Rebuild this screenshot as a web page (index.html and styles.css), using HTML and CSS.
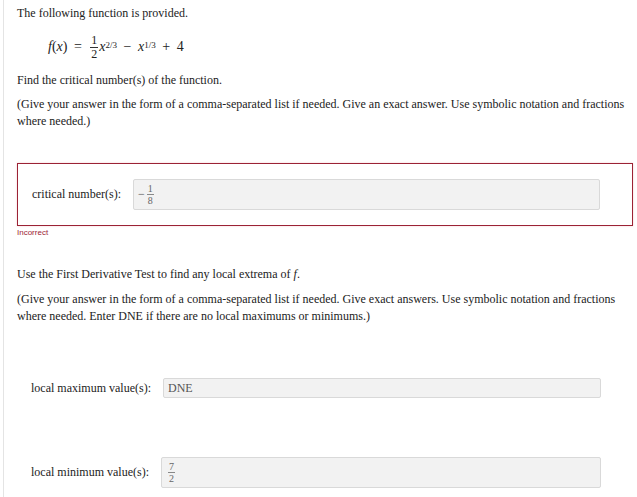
FILE: index.html
```html
<!DOCTYPE html>
<html lang="en">
<head>
    <meta charset="UTF-8">
    <title>Critical numbers</title>
    <link rel="stylesheet" href="styles.css">
</head>
<body>
    <div class="page">
        <p class="intro">The following function is provided.</p>
        <div class="formula">
            <i>f</i>(<i>x</i>) <span class="op">=</span> <span class="frac"><span>1</span><span>2</span></span><i>x</i><sup>2/3</sup> <span class="op">−</span> <i>x</i><sup>1/3</sup> <span class="op">+</span> 4
        </div>
        <p class="q">Find the critical number(s) of the function.</p>
        <p class="hint">(Give your answer in the form of a comma-separated list if needed. Give an exact answer. Use symbolic notation and fractions where needed.)</p>

        <!-- critical number -->
        <div class="answer-box wrong">
            <label>critical number(s):</label>
            <div class="field tall">−<span class="frac small"><span>1</span><span>8</span></span></div>
        </div>
        <div class="status">Incorrect</div>

        <p class="q second">Use the First Derivative Test to find any local extrema of <i>f</i>.</p>
        <p class="hint">(Give your answer in the form of a comma-separated list if needed. Give exact answers. Use symbolic notation and fractions where needed. Enter DNE if there are no local maximums or minimums.)</p>

        <div class="answer-box max">
            <label>local maximum value(s):</label>
            <div class="field">DNE</div>
        </div>
        <div class="answer-box min">
            <label>local minimum value(s):</label>
            <div class="field tall"><span class="frac small"><span>7</span><span>2</span></span></div>
        </div>
    </div>
</body>
</html>
```

FILE: styles.css
```css
* {
    margin: 0;
    padding: 0;
    box-sizing: border-box;
}

body {
    font-family: 'Liberation Serif', 'Times New Roman', serif;
    font-size: 12px;
    color: #222;
    background: #fff;
}

.page {
    margin-left: 3px;
    border-left: 1px solid #e4e4e4;
    padding: 5px 4px 0 13px;
    min-height: 497px;
    line-height: 17px;
}

.intro {
    margin-bottom: 12px;
}

.formula {
    padding-left: 31px;
    height: 26px;
    line-height: 26px;
    margin-bottom: 12px;
    font-size: 14px;
}

.formula .op {
    margin: 0 3px;
}

.formula sup {
    font-size: 9px;
    position: relative;
    top: -3px;
    vertical-align: baseline;
}

.frac {
    display: inline-block;
    vertical-align: middle;
    text-align: center;
    font-size: 12px;
    line-height: 13px;
    margin: 0 1px 0 2px;
}

.frac span {
    display: block;
}

.frac span:first-child {
    border-bottom: 1px solid #333;
    padding: 0 1px;
}

.frac.small {
    font-size: 10px;
    line-height: 11px;
    color: #666;
}

.frac.small span:first-child {
    border-bottom-color: #888;
}

.q {
    margin-bottom: 7px;
}

.answer-box {
    display: flex;
    align-items: center;
    padding: 0 32px 0 14px;
}

.answer-box label {
    margin-right: 12px;
    white-space: nowrap;
}

.answer-box.wrong {
    margin-top: 33px;
    height: 63px;
    border: 1px solid #9b2335;
    box-shadow: 0 0 2px #f4d0d4;
}

.field {
    flex: 1;
    height: 20px;
    background: #f2f2f2;
    border: 1px solid #d9d9d9;
    border-radius: 2px;
    padding: 0 4px;
    display: flex;
    align-items: center;
    color: #555;
    font-size: 12px;
}

.field.tall {
    height: 31px;
}

.status {
    font-family: 'Liberation Sans', Arial, sans-serif;
    font-size: 8px;
    color: #9b2335;
    margin-top: 2px;
    line-height: 10px;
}

.q.second {
    margin-top: 28px;
    margin-bottom: 8px;
}

.answer-box.max {
    margin-top: 53px;
}

.answer-box.min {
    margin-top: 59px;
}
```
